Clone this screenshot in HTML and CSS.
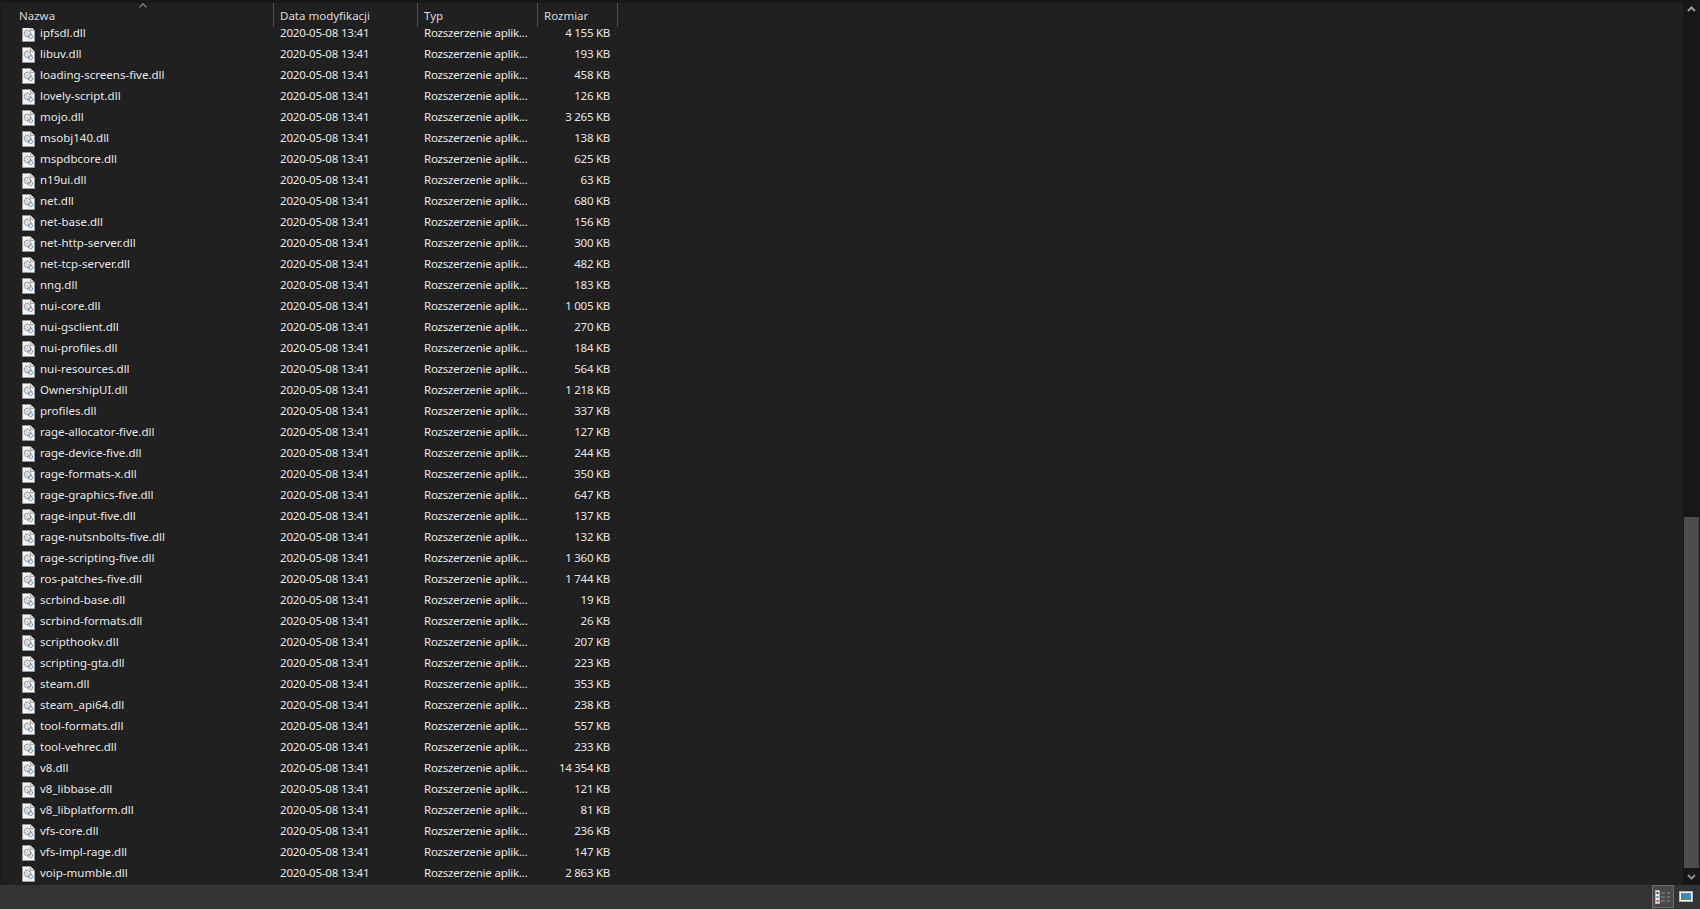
FILE: index.html
```html
<!DOCTYPE html>
<html lang="pl">
<head>
  <meta charset="UTF-8">
  <title>Eksplorator plików</title>
  <link rel="stylesheet" href="styles.css">
</head>
<body>

  <svg class="defs" width="0" height="0">
    <symbol id="dll" viewBox="0 0 13 16">
      <path d="M0.5 0.5H8.5L12.5 4.5V15.5H0.5Z" fill="#f4f4f4" stroke="#9a9a9a"/>
      <path d="M8.5 0.5V4.5H12.5" fill="#dcdcdc" stroke="#a8a8a8"/>
      <circle cx="5.5" cy="7.5" r="3.1" fill="none" stroke="#8c8c8c" stroke-width="1.6" stroke-dasharray="1.3 0.7"/>
      <circle cx="5.5" cy="7.5" r="1" fill="#b5b5b5"/>
      <circle cx="8.6" cy="10.6" r="2" fill="none" stroke="#6f9fc9" stroke-width="1.3" stroke-dasharray="1 0.5"/>
    </symbol>
  </svg>

  <div class="window">
    <div class="pane">
      <div class="top-strip"></div>
      <div class="row head">
        <div class="col-name">Nazwa<span class="sort-arrow"></span></div>
        <div class="col-date">Data modyfikacji</div>
        <div class="col-type">Typ</div>
        <div class="col-size-head">Rozmiar</div>
      </div>
      <div class="list">
        <div class="row"><div class="col-name"><svg class="icon"><use href="#dll"/></svg>ipfsdl.dll</div><div class="col-date">2020-05-08 13:41</div><div class="col-type">Rozszerzenie aplik...</div><div class="col-size">4 155 KB</div></div>
        <div class="row"><div class="col-name"><svg class="icon"><use href="#dll"/></svg>libuv.dll</div><div class="col-date">2020-05-08 13:41</div><div class="col-type">Rozszerzenie aplik...</div><div class="col-size">193 KB</div></div>
        <div class="row"><div class="col-name"><svg class="icon"><use href="#dll"/></svg>loading-screens-five.dll</div><div class="col-date">2020-05-08 13:41</div><div class="col-type">Rozszerzenie aplik...</div><div class="col-size">458 KB</div></div>
        <div class="row"><div class="col-name"><svg class="icon"><use href="#dll"/></svg>lovely-script.dll</div><div class="col-date">2020-05-08 13:41</div><div class="col-type">Rozszerzenie aplik...</div><div class="col-size">126 KB</div></div>
        <div class="row"><div class="col-name"><svg class="icon"><use href="#dll"/></svg>mojo.dll</div><div class="col-date">2020-05-08 13:41</div><div class="col-type">Rozszerzenie aplik...</div><div class="col-size">3 265 KB</div></div>
        <div class="row"><div class="col-name"><svg class="icon"><use href="#dll"/></svg>msobj140.dll</div><div class="col-date">2020-05-08 13:41</div><div class="col-type">Rozszerzenie aplik...</div><div class="col-size">138 KB</div></div>
        <div class="row"><div class="col-name"><svg class="icon"><use href="#dll"/></svg>mspdbcore.dll</div><div class="col-date">2020-05-08 13:41</div><div class="col-type">Rozszerzenie aplik...</div><div class="col-size">625 KB</div></div>
        <div class="row"><div class="col-name"><svg class="icon"><use href="#dll"/></svg>n19ui.dll</div><div class="col-date">2020-05-08 13:41</div><div class="col-type">Rozszerzenie aplik...</div><div class="col-size">63 KB</div></div>
        <div class="row"><div class="col-name"><svg class="icon"><use href="#dll"/></svg>net.dll</div><div class="col-date">2020-05-08 13:41</div><div class="col-type">Rozszerzenie aplik...</div><div class="col-size">680 KB</div></div>
        <div class="row"><div class="col-name"><svg class="icon"><use href="#dll"/></svg>net-base.dll</div><div class="col-date">2020-05-08 13:41</div><div class="col-type">Rozszerzenie aplik...</div><div class="col-size">156 KB</div></div>
        <div class="row"><div class="col-name"><svg class="icon"><use href="#dll"/></svg>net-http-server.dll</div><div class="col-date">2020-05-08 13:41</div><div class="col-type">Rozszerzenie aplik...</div><div class="col-size">300 KB</div></div>
        <div class="row"><div class="col-name"><svg class="icon"><use href="#dll"/></svg>net-tcp-server.dll</div><div class="col-date">2020-05-08 13:41</div><div class="col-type">Rozszerzenie aplik...</div><div class="col-size">482 KB</div></div>
        <div class="row"><div class="col-name"><svg class="icon"><use href="#dll"/></svg>nng.dll</div><div class="col-date">2020-05-08 13:41</div><div class="col-type">Rozszerzenie aplik...</div><div class="col-size">183 KB</div></div>
        <div class="row"><div class="col-name"><svg class="icon"><use href="#dll"/></svg>nui-core.dll</div><div class="col-date">2020-05-08 13:41</div><div class="col-type">Rozszerzenie aplik...</div><div class="col-size">1 005 KB</div></div>
        <div class="row"><div class="col-name"><svg class="icon"><use href="#dll"/></svg>nui-gsclient.dll</div><div class="col-date">2020-05-08 13:41</div><div class="col-type">Rozszerzenie aplik...</div><div class="col-size">270 KB</div></div>
        <div class="row"><div class="col-name"><svg class="icon"><use href="#dll"/></svg>nui-profiles.dll</div><div class="col-date">2020-05-08 13:41</div><div class="col-type">Rozszerzenie aplik...</div><div class="col-size">184 KB</div></div>
        <div class="row"><div class="col-name"><svg class="icon"><use href="#dll"/></svg>nui-resources.dll</div><div class="col-date">2020-05-08 13:41</div><div class="col-type">Rozszerzenie aplik...</div><div class="col-size">564 KB</div></div>
        <div class="row"><div class="col-name"><svg class="icon"><use href="#dll"/></svg>OwnershipUI.dll</div><div class="col-date">2020-05-08 13:41</div><div class="col-type">Rozszerzenie aplik...</div><div class="col-size">1 218 KB</div></div>
        <div class="row"><div class="col-name"><svg class="icon"><use href="#dll"/></svg>profiles.dll</div><div class="col-date">2020-05-08 13:41</div><div class="col-type">Rozszerzenie aplik...</div><div class="col-size">337 KB</div></div>
        <div class="row"><div class="col-name"><svg class="icon"><use href="#dll"/></svg>rage-allocator-five.dll</div><div class="col-date">2020-05-08 13:41</div><div class="col-type">Rozszerzenie aplik...</div><div class="col-size">127 KB</div></div>
        <div class="row"><div class="col-name"><svg class="icon"><use href="#dll"/></svg>rage-device-five.dll</div><div class="col-date">2020-05-08 13:41</div><div class="col-type">Rozszerzenie aplik...</div><div class="col-size">244 KB</div></div>
        <div class="row"><div class="col-name"><svg class="icon"><use href="#dll"/></svg>rage-formats-x.dll</div><div class="col-date">2020-05-08 13:41</div><div class="col-type">Rozszerzenie aplik...</div><div class="col-size">350 KB</div></div>
        <div class="row"><div class="col-name"><svg class="icon"><use href="#dll"/></svg>rage-graphics-five.dll</div><div class="col-date">2020-05-08 13:41</div><div class="col-type">Rozszerzenie aplik...</div><div class="col-size">647 KB</div></div>
        <div class="row"><div class="col-name"><svg class="icon"><use href="#dll"/></svg>rage-input-five.dll</div><div class="col-date">2020-05-08 13:41</div><div class="col-type">Rozszerzenie aplik...</div><div class="col-size">137 KB</div></div>
        <div class="row"><div class="col-name"><svg class="icon"><use href="#dll"/></svg>rage-nutsnbolts-five.dll</div><div class="col-date">2020-05-08 13:41</div><div class="col-type">Rozszerzenie aplik...</div><div class="col-size">132 KB</div></div>
        <div class="row"><div class="col-name"><svg class="icon"><use href="#dll"/></svg>rage-scripting-five.dll</div><div class="col-date">2020-05-08 13:41</div><div class="col-type">Rozszerzenie aplik...</div><div class="col-size">1 360 KB</div></div>
        <div class="row"><div class="col-name"><svg class="icon"><use href="#dll"/></svg>ros-patches-five.dll</div><div class="col-date">2020-05-08 13:41</div><div class="col-type">Rozszerzenie aplik...</div><div class="col-size">1 744 KB</div></div>
        <div class="row"><div class="col-name"><svg class="icon"><use href="#dll"/></svg>scrbind-base.dll</div><div class="col-date">2020-05-08 13:41</div><div class="col-type">Rozszerzenie aplik...</div><div class="col-size">19 KB</div></div>
        <div class="row"><div class="col-name"><svg class="icon"><use href="#dll"/></svg>scrbind-formats.dll</div><div class="col-date">2020-05-08 13:41</div><div class="col-type">Rozszerzenie aplik...</div><div class="col-size">26 KB</div></div>
        <div class="row"><div class="col-name"><svg class="icon"><use href="#dll"/></svg>scripthookv.dll</div><div class="col-date">2020-05-08 13:41</div><div class="col-type">Rozszerzenie aplik...</div><div class="col-size">207 KB</div></div>
        <div class="row"><div class="col-name"><svg class="icon"><use href="#dll"/></svg>scripting-gta.dll</div><div class="col-date">2020-05-08 13:41</div><div class="col-type">Rozszerzenie aplik...</div><div class="col-size">223 KB</div></div>
        <div class="row"><div class="col-name"><svg class="icon"><use href="#dll"/></svg>steam.dll</div><div class="col-date">2020-05-08 13:41</div><div class="col-type">Rozszerzenie aplik...</div><div class="col-size">353 KB</div></div>
        <div class="row"><div class="col-name"><svg class="icon"><use href="#dll"/></svg>steam_api64.dll</div><div class="col-date">2020-05-08 13:41</div><div class="col-type">Rozszerzenie aplik...</div><div class="col-size">238 KB</div></div>
        <div class="row"><div class="col-name"><svg class="icon"><use href="#dll"/></svg>tool-formats.dll</div><div class="col-date">2020-05-08 13:41</div><div class="col-type">Rozszerzenie aplik...</div><div class="col-size">557 KB</div></div>
        <div class="row"><div class="col-name"><svg class="icon"><use href="#dll"/></svg>tool-vehrec.dll</div><div class="col-date">2020-05-08 13:41</div><div class="col-type">Rozszerzenie aplik...</div><div class="col-size">233 KB</div></div>
        <div class="row"><div class="col-name"><svg class="icon"><use href="#dll"/></svg>v8.dll</div><div class="col-date">2020-05-08 13:41</div><div class="col-type">Rozszerzenie aplik...</div><div class="col-size">14 354 KB</div></div>
        <div class="row"><div class="col-name"><svg class="icon"><use href="#dll"/></svg>v8_libbase.dll</div><div class="col-date">2020-05-08 13:41</div><div class="col-type">Rozszerzenie aplik...</div><div class="col-size">121 KB</div></div>
        <div class="row"><div class="col-name"><svg class="icon"><use href="#dll"/></svg>v8_libplatform.dll</div><div class="col-date">2020-05-08 13:41</div><div class="col-type">Rozszerzenie aplik...</div><div class="col-size">81 KB</div></div>
        <div class="row"><div class="col-name"><svg class="icon"><use href="#dll"/></svg>vfs-core.dll</div><div class="col-date">2020-05-08 13:41</div><div class="col-type">Rozszerzenie aplik...</div><div class="col-size">236 KB</div></div>
        <div class="row"><div class="col-name"><svg class="icon"><use href="#dll"/></svg>vfs-impl-rage.dll</div><div class="col-date">2020-05-08 13:41</div><div class="col-type">Rozszerzenie aplik...</div><div class="col-size">147 KB</div></div>
        <div class="row"><div class="col-name"><svg class="icon"><use href="#dll"/></svg>voip-mumble.dll</div><div class="col-date">2020-05-08 13:41</div><div class="col-type">Rozszerzenie aplik...</div><div class="col-size">2 863 KB</div></div>
      </div>
    </div>

    <div class="scrollbar">
      <div class="scroll-btn">
        <svg width="9" height="6" viewBox="0 0 9 6"><path d="M1 5L4.5 1.5L8 5" fill="none" stroke="#9a9a9a" stroke-width="2"/></svg>
      </div>
      <div class="scroll-track"><div class="scroll-thumb"></div></div>
      <div class="scroll-btn">
        <svg width="9" height="6" viewBox="0 0 9 6"><path d="M1 1L4.5 4.5L8 1" fill="none" stroke="#8a8a8a" stroke-width="2"/></svg>
      </div>
    </div>
  </div>

  <div class="statusbar">
    <div class="view-btn active">
      <svg width="16" height="14" viewBox="0 0 16 14">
        <rect x="0.5" y="0.5" width="4" height="13" fill="#eeeeee" stroke="#b0b0b0"/>
        <rect x="1.5" y="2" width="2" height="2" fill="#444"/>
        <rect x="1.5" y="6" width="2" height="2" fill="#4a90c0"/>
        <rect x="1.5" y="10" width="2" height="2" fill="#c04040"/>
        <path d="M6 3H10M12 3H15M6 7H10M12 7H15M6 11H10M12 11H15" stroke="#8f8f8f"/>
      </svg>
    </div>
    <div class="view-btn">
      <svg width="14" height="11" viewBox="0 0 14 11">
        <rect x="0.5" y="0.5" width="13" height="10" fill="#f2f2f2" stroke="#b5b5b5"/>
        <rect x="2" y="2" width="10" height="4" fill="#3f8ccc"/>
        <rect x="2" y="6" width="10" height="3" fill="#5d8a5a"/>
      </svg>
    </div>
  </div>

</body>
</html>
```

FILE: styles.css
```css
* {
  box-sizing: border-box;
}

body {
  margin: 0;
  height: 909px;
  overflow: hidden;
  display: flex;
  flex-direction: column;
  background: #202020;
  color: #e6e6e6;
  font-family: "Noto Sans", "Open Sans", sans-serif;
  font-size: 11.5px;
}

.defs {
  position: absolute;
}

.window {
  flex: 1;
  display: flex;
  min-height: 0;
}

.pane {
  flex: 1;
  min-width: 0;
  border-left: 1px solid #191919;
}

.top-strip {
  height: 3px;
  background: #191919;
  margin-left: -1px;
}

.row {
  display: grid;
  grid-template-columns: 273px 144px 120px 80px;
  height: 21px;
  line-height: 19px;
  white-space: nowrap;
}

/* header covers the top of the first row */
.head {
  height: 25px;
  line-height: 25px;
  color: #d8d8d8;
  margin-bottom: -5px;
  position: relative;
  z-index: 1;
  background: #202020;
}

.head > div {
  border-right: 1px solid #4d4d4d;
  height: 24px;
  position: relative;
}

.col-name {
  display: flex;
  align-items: flex-start;
  padding-left: 21px;
}

.head .col-name {
  padding-left: 18px;
}

.col-date {
  padding-left: 6px;
  letter-spacing: -0.19px;
}

.col-type {
  padding-left: 6px;
  letter-spacing: -0.2px;
}

.col-size-head {
  padding-left: 6px;
}

.head .col-date,
.head .col-type {
  letter-spacing: 0;
}

.col-size {
  text-align: right;
  padding-right: 8px;
  letter-spacing: -0.27px;
}

.icon {
  width: 13px;
  height: 16px;
  margin: 3px 5px 0 0;
  flex: none;
}

.sort-arrow {
  position: absolute;
  left: 139px;
  top: 1px;
  width: 6px;
  height: 6px;
  border-left: 1px solid #a0a0a0;
  border-top: 1px solid #a0a0a0;
  transform: rotate(45deg) scale(0.9);
}

.scrollbar {
  width: 17px;
  display: flex;
  flex-direction: column;
  background: #171717;
}

.scroll-btn {
  height: 17px;
  display: flex;
  align-items: center;
  justify-content: center;
}

.scroll-track {
  flex: 1;
  display: flex;
  flex-direction: column;
  justify-content: flex-end;
  padding: 0 1px;
}

.scroll-thumb {
  height: 351px;
  background: #4d4d4d;
}

.statusbar {
  height: 24px;
  flex: none;
  display: flex;
  justify-content: flex-end;
  align-items: stretch;
  gap: 1px;
  padding: 0 3px 1px 0;
  background: #333333;
}

.view-btn {
  width: 22px;
  display: flex;
  align-items: center;
  justify-content: center;
}

.view-btn.active {
  background: #4a4a4a;
  border: 1px solid #6e6e6e;
}
```
